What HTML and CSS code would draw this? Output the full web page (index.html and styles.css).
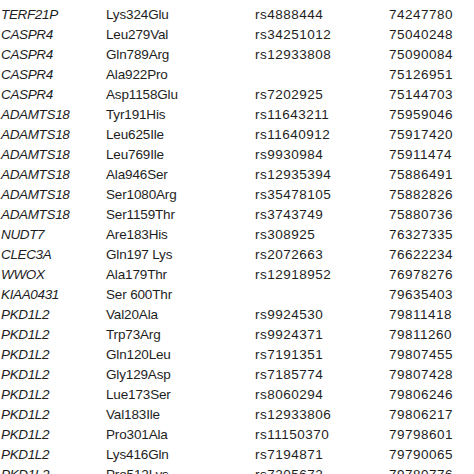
FILE: index.html
```html
<!DOCTYPE html>
<html>
<head>
<meta charset="utf-8">
<link rel="stylesheet" href="styles.css">
</head>
<body>
<div class="table">
  <div class="row"><span class="gene">TERF21P</span><span class="aa">Lys324Glu</span><span class="num">rs4888444</span><span class="num">74247780</span></div>
  <div class="row"><span class="gene">CASPR4</span><span class="aa">Leu279Val</span><span class="num">rs34251012</span><span class="num">75040248</span></div>
  <div class="row"><span class="gene">CASPR4</span><span class="aa">Gln789Arg</span><span class="num">rs12933808</span><span class="num">75090084</span></div>
  <div class="row"><span class="gene">CASPR4</span><span class="aa">Ala922Pro</span><span class="num"></span><span class="num">75126951</span></div>
  <div class="row"><span class="gene">CASPR4</span><span class="aa">Asp1158Glu</span><span class="num">rs7202925</span><span class="num">75144703</span></div>
  <div class="row"><span class="gene">ADAMTS18</span><span class="aa">Tyr191His</span><span class="num">rs11643211</span><span class="num">75959046</span></div>
  <div class="row"><span class="gene">ADAMTS18</span><span class="aa">Leu625Ile</span><span class="num">rs11640912</span><span class="num">75917420</span></div>
  <div class="row"><span class="gene">ADAMTS18</span><span class="aa">Leu769Ile</span><span class="num">rs9930984</span><span class="num">75911474</span></div>
  <div class="row"><span class="gene">ADAMTS18</span><span class="aa">Ala946Ser</span><span class="num">rs12935394</span><span class="num">75886491</span></div>
  <div class="row"><span class="gene">ADAMTS18</span><span class="aa">Ser1080Arg</span><span class="num">rs35478105</span><span class="num">75882826</span></div>
  <div class="row"><span class="gene">ADAMTS18</span><span class="aa">Ser1159Thr</span><span class="num">rs3743749</span><span class="num">75880736</span></div>
  <div class="row"><span class="gene">NUDT7</span><span class="aa">Are183His</span><span class="num">rs308925</span><span class="num">76327335</span></div>
  <div class="row"><span class="gene">CLEC3A</span><span class="aa">Gln197 Lys</span><span class="num">rs2072663</span><span class="num">76622234</span></div>
  <div class="row"><span class="gene">WWOX</span><span class="aa">Ala179Thr</span><span class="num">rs12918952</span><span class="num">76978276</span></div>
  <div class="row"><span class="gene">KIAA0431</span><span class="aa">Ser 600Thr</span><span class="num"></span><span class="num">79635403</span></div>
  <div class="row"><span class="gene">PKD1L2</span><span class="aa">Val20Ala</span><span class="num">rs9924530</span><span class="num">79811418</span></div>
  <div class="row"><span class="gene">PKD1L2</span><span class="aa">Trp73Arg</span><span class="num">rs9924371</span><span class="num">79811260</span></div>
  <div class="row"><span class="gene">PKD1L2</span><span class="aa">Gln120Leu</span><span class="num">rs7191351</span><span class="num">79807455</span></div>
  <div class="row"><span class="gene">PKD1L2</span><span class="aa">Gly129Asp</span><span class="num">rs7185774</span><span class="num">79807428</span></div>
  <div class="row"><span class="gene">PKD1L2</span><span class="aa">Lue173Ser</span><span class="num">rs8060294</span><span class="num">79806246</span></div>
  <div class="row"><span class="gene">PKD1L2</span><span class="aa">Val183Ile</span><span class="num">rs12933806</span><span class="num">79806217</span></div>
  <div class="row"><span class="gene">PKD1L2</span><span class="aa">Pro301Ala</span><span class="num">rs11150370</span><span class="num">79798601</span></div>
  <div class="row"><span class="gene">PKD1L2</span><span class="aa">Lys416Gln</span><span class="num">rs7194871</span><span class="num">79790065</span></div>
  <div class="row"><span class="gene">PKD1L2</span><span class="aa">Pro512Lys</span><span class="num">rs7205672</span><span class="num">79780776</span></div>
</div>
</body>
</html>
```

FILE: styles.css
```css
html, body {
  margin: 0;
  padding: 0;
  background: #ffffff;
  overflow: hidden;
}
body {
  font-family: "Liberation Sans", Arial, sans-serif;
  font-size: 13.5px;
  color: #1e1e1e;
}
.table {
  display: flex;
  flex-direction: column;
  padding: 5px 0 0 1px;
}
.row {
  display: grid;
  grid-template-columns: 105px 149px 134px 1fr;
  height: 20px;
  line-height: 20px;
  white-space: nowrap;
}
.gene {
  font-style: italic;
  letter-spacing: -0.35px;
}
.aa {
  letter-spacing: -0.15px;
}
.num {
  letter-spacing: 0.5px;
}
```
